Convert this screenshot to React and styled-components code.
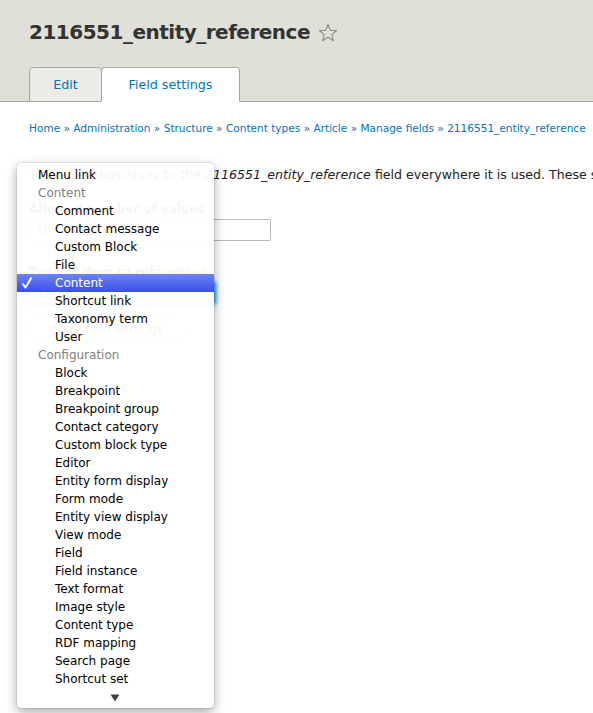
import React from "react";
import styled, { createGlobalStyle } from "styled-components";

const GlobalStyle = createGlobalStyle`
  html, body {
    margin: 0;
    padding: 0;
    background: #ffffff;
  }
  body {
    font-family: "DejaVu Sans", "Open Sans", sans-serif;
    color: #222;
    overflow: hidden;
  }
`;

const crumbs = [
  "Home",
  "Administration",
  "Structure",
  "Content types",
  "Article",
  "Manage fields",
  "2116551_entity_reference",
];

const menu = [
  { label: "Menu link", kind: "top" },
  { label: "Content", kind: "group" },
  { label: "Comment" },
  { label: "Contact message" },
  { label: "Custom Block" },
  { label: "File" },
  { label: "Content", selected: true },
  { label: "Shortcut link" },
  { label: "Taxonomy term" },
  { label: "User" },
  { label: "Configuration", kind: "group" },
  { label: "Block" },
  { label: "Breakpoint" },
  { label: "Breakpoint group" },
  { label: "Contact category" },
  { label: "Custom block type" },
  { label: "Editor" },
  { label: "Entity form display" },
  { label: "Form mode" },
  { label: "Entity view display" },
  { label: "View mode" },
  { label: "Field" },
  { label: "Field instance" },
  { label: "Text format" },
  { label: "Image style" },
  { label: "Content type" },
  { label: "RDF mapping" },
  { label: "Search page" },
  { label: "Shortcut set" },
];

export default function App() {
  return (
    <Page>
      <GlobalStyle />
      <Header>
        <TitleRow>
          <Title>2116551_entity_reference</Title>
          <Star width="20" height="20" viewBox="0 0 20 20">
            <polygon
              points="10,1.5 12.4,7.3 18.6,7.6 13.8,11.6 15.4,17.8 10,14.3 4.6,17.8 6.2,11.6 1.4,7.6 7.6,7.3"
              fill="none"
              stroke="#8b8b7c"
              strokeWidth="1.1"
              strokeLinejoin="round"
            />
          </Star>
        </TitleRow>
        <Tabs>
          <Tab $width={73}>Edit</Tab>
          <Tab $width={139} $active>
            Field settings
          </Tab>
        </Tabs>
      </Header>

      <Content>
        <Breadcrumb>
          {crumbs.map((c, i) => (
            <React.Fragment key={i}>
              {i > 0 && <Sep> » </Sep>}
              <Crumb>{c}</Crumb>
            </React.Fragment>
          ))}
        </Breadcrumb>

        <Description>
          These settings apply to the <em>2116551_entity_reference</em> field
          everywhere it is used. These settings impact the way that data is
          stored in the database and cannot be changed once data has been
          created.
        </Description>

        <Label>Allowed number of values</Label>
        <Field $width={242}>Unlimited</Field>

        <Label $top={23}>
          Type of item to reference<Req>*</Req>
        </Label>
        <Field $width={186} $focus>
          Content
        </Field>

        <Button>Save field settings</Button>
      </Content>

      <Menu>
        {menu.map((m, i) => (
          <MenuRow key={i} $kind={m.kind} $selected={m.selected}>
            {m.selected && (
              <Check width="10" height="12" viewBox="0 0 10 12">
                <path
                  d="M1 7.2 L3.6 10.6 L9 1.2"
                  fill="none"
                  stroke="#ffffff"
                  strokeWidth="1.9"
                  strokeLinecap="round"
                  strokeLinejoin="round"
                />
              </Check>
            )}
            {m.label}
          </MenuRow>
        ))}
        <MoreRow>
          <svg width="10" height="8" viewBox="0 0 10 8">
            <polygon points="0.5,0.5 9.5,0.5 5,7.5" fill="#404040" />
          </svg>
        </MoreRow>
      </Menu>
    </Page>
  );
}

const Page = styled.div`
  position: relative;
  width: 593px;
  height: 713px;
  overflow: hidden;
`;

const Header = styled.header`
  background: #e0e0d8;
  padding: 20px 29px 0;
  border-bottom: 1px solid #a6a6a6;
`;

const TitleRow = styled.div`
  display: flex;
  align-items: center;
  gap: 8px;
  height: 24px;
`;

const Title = styled.h1`
  margin: 0;
  font-size: 20px;
  line-height: 24px;
  font-weight: bold;
  letter-spacing: -0.5px;
  color: #333;
`;

const Star = styled.svg`
  display: block;
  margin-top: 1px;
`;

const Tabs = styled.div`
  display: flex;
  margin-top: 23px;
  margin-bottom: -1px;
`;

const Tab = styled.div`
  box-sizing: border-box;
  width: ${(p) => p.$width}px;
  height: 35px;
  margin-left: ${(p) => (p.$active ? "-1px" : "0")};
  display: flex;
  align-items: center;
  justify-content: center;
  border: 1px solid #a6a6a6;
  border-bottom-color: ${(p) => (p.$active ? "#ffffff" : "#a6a6a6")};
  border-radius: 4px 4px 0 0;
  background: ${(p) => (p.$active ? "#ffffff" : "#ecece6")};
  color: #0074bd;
  font-size: 12.7px;
`;

const Content = styled.main`
  padding: 18px 29px 0;
  white-space: nowrap;
`;

const Breadcrumb = styled.div`
  font-size: 10.55px;
  line-height: 16px;
  color: #0074bd;
`;

const Crumb = styled.span`
  color: #0074bd;
`;

const Sep = styled.span`
  color: #2a5a86;
  white-space: pre;
`;

const Description = styled.p`
  margin: 31px 0 0;
  font-size: 12.6px;
  line-height: 16px;
  color: #222;
`;

const Label = styled.div`
  margin-top: ${(p) => p.$top ?? 18}px;
  font-size: 12px;
  line-height: 16px;
  font-weight: bold;
  color: #333;
`;

const Req = styled.span`
  color: #e32700;
  font-weight: normal;
`;

const Field = styled.div`
  box-sizing: border-box;
  width: ${(p) => p.$width}px;
  height: 22px;
  margin-top: 2px;
  padding: 0 8px;
  display: flex;
  align-items: center;
  border: 1px solid ${(p) => (p.$focus ? "#40b6ff" : "#b8b8b8")};
  box-shadow: ${(p) => (p.$focus ? "0 0 4px 1px #1a7fd0" : "none")};
  border-radius: 2px;
  font-size: 12px;
  color: #555;
`;

const Button = styled.div`
  display: inline-block;
  margin-top: 13px;
  padding: 4px 22px;
  border: 1px solid #c8c8c0;
  border-radius: 20px;
  background: #f4f4f0;
  font-size: 12px;
  line-height: 14px;
  color: #333;
`;

const Menu = styled.div`
  position: absolute;
  left: 17px;
  top: 163px;
  width: 197px;
  box-sizing: border-box;
  padding: 3px 0 0;
  background: rgba(255, 255, 255, 0.95);
  border-radius: 5px;
  box-shadow: 0 0 0 1px rgba(0, 0, 0, 0.06), 0 4px 12px rgba(0, 0, 0, 0.35);
  font-family: "DejaVu Sans", sans-serif;
  font-size: 12px;
`;

const MenuRow = styled.div`
  position: relative;
  height: 18px;
  line-height: 18px;
  padding-left: ${(p) => (p.$kind ? 21 : 38)}px;
  color: ${(p) =>
    p.$selected ? "#ffffff" : p.$kind === "group" ? "#808080" : "#000000"};
  background: ${(p) =>
    p.$selected ? "linear-gradient(#6d84f6, #3a4fee)" : "transparent"};
`;

const Check = styled.svg`
  position: absolute;
  left: 5px;
  top: 3px;
`;

const MoreRow = styled.div`
  height: 20px;
  display: flex;
  align-items: center;
  justify-content: center;
  padding-right: 2px;
`;
